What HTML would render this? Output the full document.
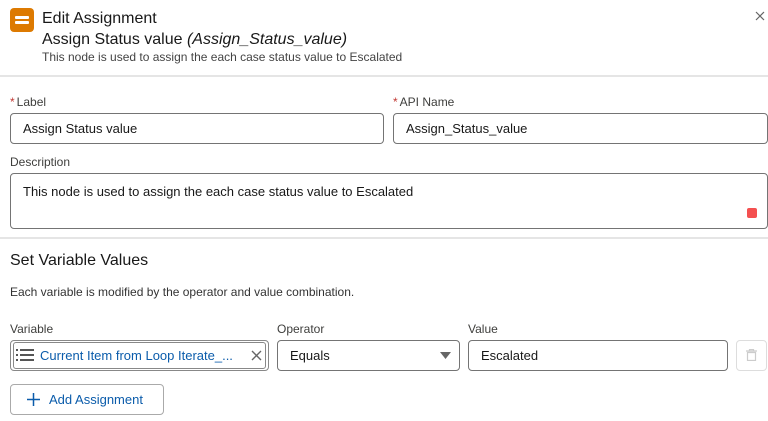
<!DOCTYPE html>
<html><head><style>
*{box-sizing:border-box;margin:0;padding:0}
body{width:768px;height:421px;overflow:hidden;background:#fff;font-family:"Liberation Sans",Arial,sans-serif;color:#181818;position:relative}
.a{position:absolute}
.lbl{font-size:12px;color:#3e3e3c}
.req{color:#c23934;margin-right:2px}
.inp{position:absolute;border:1px solid #747474;border-radius:4px;height:31px;font-size:13px;padding-left:12px;line-height:29px;background:#fff}
</style></head><body>
<div class="a" style="left:10px;top:8px;width:24px;height:24px;background:#dd7a01;border-radius:4px"></div>
<div class="a" style="left:15px;top:16px;width:14px;height:2.5px;background:#fff;border-radius:1px"></div>
<div class="a" style="left:15px;top:21px;width:14px;height:2.5px;background:#fff;border-radius:1px"></div>
<div class="a" style="left:42px;top:10px;font-size:16px">Edit Assignment</div>
<div class="a" style="left:42px;top:31px;font-size:16px">Assign Status value <i>(Assign_Status_value)</i></div>
<div class="a" style="left:42px;top:50px;font-size:12px;color:#444">This node is used to assign the each case status value to Escalated</div>
<svg class="a" style="left:755px;top:11px" width="10" height="10"><path d="M1 1L9 9M9 1L1 9" stroke="#666" stroke-width="1.2"/></svg>
<div class="a" style="left:0;top:75px;width:768px;height:2px;background:#e5e5e5"></div>
<div class="a lbl" style="left:10px;top:95px"><span class="req">*</span>Label</div>
<div class="inp" style="left:10px;top:113px;width:374px">Assign Status value</div>
<div class="a lbl" style="left:393px;top:95px"><span class="req">*</span>API Name</div>
<div class="inp" style="left:393px;top:113px;width:375px">Assign_Status_value</div>
<div class="a lbl" style="left:10px;top:155px">Description</div>
<div class="inp" style="left:10px;top:173px;width:758px;height:56px;line-height:1;padding-top:11px">This node is used to assign the each case status value to Escalated</div>
<div class="a" style="left:747px;top:208px;width:10px;height:10px;background:#f45050;border-radius:2px"></div>
<div class="a" style="left:0;top:237px;width:768px;height:2px;background:#e5e5e5"></div>
<div class="a" style="left:10px;top:252px;font-size:16px">Set Variable Values</div>
<div class="a" style="left:10px;top:285px;font-size:12px;color:#333">Each variable is modified by the operator and value combination.</div>
<div class="a lbl" style="left:10px;top:322px">Variable</div>
<div class="a lbl" style="left:277px;top:322px">Operator</div>
<div class="a lbl" style="left:468px;top:322px">Value</div>
<div class="a" style="left:10px;top:340px;width:259px;height:31px;border:1px solid #888;border-radius:4px"></div>
<div class="a" style="left:13px;top:342px;width:253px;height:27px;border:1px solid #888;border-radius:3px;font-size:13px;color:#0b5cab;line-height:25px;padding-left:26px">Current Item from Loop Iterate_...</div>
<svg class="a" style="left:16px;top:348px" width="18" height="14"><g fill="#555"><rect x="0" y="1" width="2" height="2"/><rect x="0" y="6" width="2" height="2"/><rect x="0" y="11" width="2" height="2"/><rect x="4" y="1" width="14" height="2"/><rect x="4" y="6" width="14" height="2"/><rect x="4" y="11" width="14" height="2"/></g></svg>
<svg class="a" style="left:251px;top:350px" width="11" height="11"><path d="M1 1L10 10M10 1L1 10" stroke="#666" stroke-width="1.4"/></svg>
<div class="inp" style="left:277px;top:340px;width:183px">Equals</div>
<svg class="a" style="left:440px;top:352px" width="11" height="7"><path d="M0 0H11L5.5 7Z" fill="#666"/></svg>
<div class="inp" style="left:468px;top:340px;width:260px">Escalated</div>
<div class="a" style="left:736px;top:340px;width:31px;height:31px;border:1px solid #ddd;border-radius:4px"></div>
<svg class="a" style="left:746px;top:349px" width="11" height="12"><path d="M0 2H11M3.5 2V0.5H7.5V2M1.5 3.5H9.5V11.5H1.5Z" fill="none" stroke="#ccc" stroke-width="1.2"/></svg>
<div class="a" style="left:10px;top:384px;width:154px;height:31px;border:1px solid #aaa;border-radius:4px;font-size:13px;color:#0b5cab;line-height:29px;padding-left:38px">Add Assignment</div>
<svg class="a" style="left:27px;top:393px" width="13" height="13"><path d="M6.5 0V13M0 6.5H13" stroke="#0b5cab" stroke-width="1.5"/></svg>
</body></html>
